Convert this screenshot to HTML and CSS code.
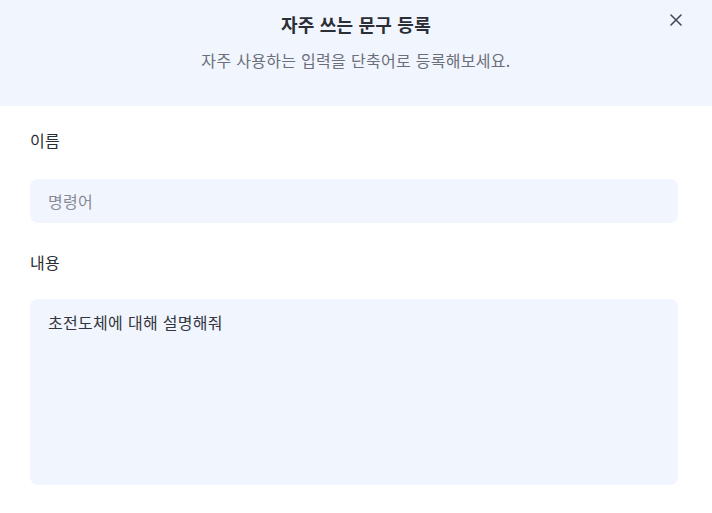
FILE: index.html
```html
<!DOCTYPE html>
<html lang="ko">
<head>
<meta charset="utf-8">
<link rel="stylesheet" href="styles.css">
</head>
<body>
<div class="modal">
  <header class="head">
    <h1 class="title">자주 쓰는 문구 등록</h1>
    <p class="sub">자주 사용하는 입력을 단축어로 등록해보세요.</p>
    <button class="close" aria-label="닫기">
      <svg width="12" height="12" viewBox="0 0 12 12"><path d="M1 1L11 11M11 1L1 11" stroke="#464a55" stroke-width="1.6" stroke-linecap="round"/></svg>
    </button>
  </header>
  <div class="body">
    <label class="label">이름</label>
    <div class="field input"><span class="ph">명령어</span></div>
    <label class="label">내용</label>
    <div class="field area"><span class="val">초전도체에 대해 설명해줘</span></div>
  </div>
</div>
</body>
</html>
```
FILE: styles.css
```css
* { box-sizing: border-box; }
html, body { margin: 0; padding: 0; background: #fff; }
body { font-family: "Noto Sans CJK KR", "Noto Sans", sans-serif; color: #23262d; }
.modal { width: 712px; height: 513px; background: #fff; }
.head { position: relative; background: #f1f5fd; height: 106px; padding-top: 12px; text-align: center; }
.title { margin: 0; font-size: 18px; font-weight: 700; line-height: 24px; color: #2b2e35; letter-spacing: 0.2px; }
.sub { margin: 13px 0 0; font-size: 16px; line-height: 22px; color: #6b6f7a; letter-spacing: 0.3px; }
.close { position: absolute; top: 14px; right: 30px; width: 12px; height: 12px; padding: 0; border: 0; background: none; display: flex; }
.body { padding: 20px 34px 0 30px; display: flex; flex-direction: column; }
.label { font-size: 16px; line-height: 28px; color: #2b2e35; letter-spacing: 0.2px; }
.field { background: #f1f5fd; border-radius: 8px; padding: 0 18px; font-size: 16px; letter-spacing: 0.3px; }
.input { height: 44px; display: flex; align-items: center; margin: 25px 0 25px; }
.ph { color: #868b96; }
.area { height: 186px; padding-top: 10px; margin-top: 23px; line-height: 26px; }
.val { color: #33363e; }
```
